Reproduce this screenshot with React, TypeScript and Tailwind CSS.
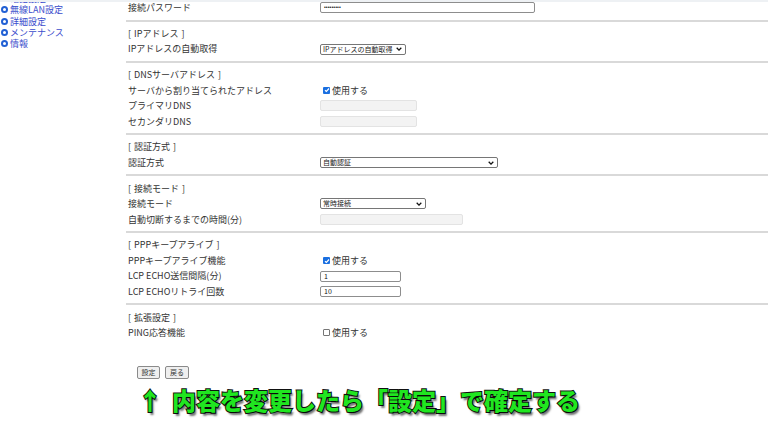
import type { ReactNode } from "react";

const font = "font-['Noto_Sans_CJK_JP','Noto_Sans',sans-serif]";

const menu = ["電話設定", "無線LAN設定", "詳細設定", "メンテナンス", "情報"];

function Bullet() {
  return (
    <span className="mr-[2px] inline-block h-[7px] w-[7px] shrink-0 rounded-full border-2 border-[#2160d4] bg-white" />
  );
}

function Row({ label, children }: { label: string; children?: ReactNode }) {
  return (
    <div className="flex h-[15.5px] items-center">
      <div className="w-[192px] shrink-0 whitespace-nowrap">{label}</div>
      {children}
    </div>
  );
}

function Section({
  title,
  children,
  last = false,
}: {
  title?: string;
  children: ReactNode;
  last?: boolean;
}) {
  return (
    <div
      className={`pb-[4px] ${title ? "pt-[4.25px]" : ""} ${
        last ? "" : "border-b-2 border-[#d9d9d9]"
      }`}
    >
      {title && (
        <div className="flex h-[15.5px] items-center gap-[3px] pl-[2px] whitespace-nowrap">
          <span>[</span>
          <span>{title}</span>
          <span>]</span>
        </div>
      )}
      <div className="pl-[2px]">{children}</div>
    </div>
  );
}

function TextBox({
  width,
  value = "",
  disabled = false,
}: {
  width: string;
  value?: string;
  disabled?: boolean;
}) {
  return (
    <div
      className={`flex h-[11px] items-center rounded-[2px] border px-[3px] text-[7px] leading-none text-[#111] ${width} ${
        disabled
          ? "border-[#e3e3e3] bg-[#f3f3f3]"
          : "border-[#8d8d8d] bg-white"
      }`}
    >
      {value}
    </div>
  );
}

function Select({ width, value }: { width: string; value: string }) {
  return (
    <div
      className={`flex h-[11px] items-center justify-between rounded-[2px] border border-[#767676] bg-white pl-[2px] pr-[3px] text-[7px] leading-none text-[#222] ${width}`}
    >
      <span className="whitespace-nowrap">{value}</span>
      <svg width="6" height="4" viewBox="0 0 6 4" className="shrink-0">
        <path d="M0.7 0.8 L3 3.1 L5.3 0.8" fill="none" stroke="#111" strokeWidth="1.3" />
      </svg>
    </div>
  );
}

function Check({ checked }: { checked: boolean }) {
  return (
    <div className="flex items-center pl-[3px]">
      {checked ? (
        <span className="mr-[2px] flex h-[7px] w-[7px] items-center justify-center rounded-[1px] bg-[#1a6fe0]">
          <svg width="6" height="6" viewBox="0 0 6 6">
            <path d="M1 3.2 L2.4 4.5 L5 1.5" fill="none" stroke="#fff" strokeWidth="1.2" />
          </svg>
        </span>
      ) : (
        <span className="mr-[2px] h-[7px] w-[7px] rounded-[1px] border border-[#767676] bg-white" />
      )}
      <span>使用する</span>
    </div>
  );
}

export default function App() {
  return (
    <div className={`relative flex h-[432px] w-[768px] overflow-hidden bg-white ${font}`}>
      <div className="absolute inset-x-0 top-0 h-[2px] bg-[#eef1f4]" />

      <nav className="-mt-[7px] w-[126px] shrink-0 pl-[1px] text-[9px] leading-[11.3px] text-[#3a4ccc]">
        {menu.map((m) => (
          <div key={m} className="flex h-[11.3px] items-center whitespace-nowrap">
            <Bullet />
            {m}
          </div>
        ))}
      </nav>

      <main className="flex-1 text-[9px] text-[#333]">
        <Section>
          <Row label="接続パスワード">
            <TextBox width="w-[215px] !text-[5.5px]" value="•••••••••" />
          </Row>
        </Section>

        <Section title="IPアドレス">
          <Row label="IPアドレスの自動取得">
            <Select width="w-[86px]" value="IPアドレスの自動取得" />
          </Row>
        </Section>

        <Section title="DNSサーバアドレス">
          <Row label="サーバから割り当てられたアドレス">
            <Check checked />
          </Row>
          <Row label="プライマリDNS">
            <TextBox width="w-[97px]" disabled />
          </Row>
          <Row label="セカンダリDNS">
            <TextBox width="w-[97px]" disabled />
          </Row>
        </Section>

        <Section title="認証方式">
          <Row label="認証方式">
            <Select width="w-[178px]" value="自動認証" />
          </Row>
        </Section>

        <Section title="接続モード">
          <Row label="接続モード">
            <Select width="w-[106px]" value="常時接続" />
          </Row>
          <Row label="自動切断するまでの時間(分)">
            <TextBox width="w-[143px]" disabled />
          </Row>
        </Section>

        <Section title="PPPキープアライブ">
          <Row label="PPPキープアライブ機能">
            <Check checked />
          </Row>
          <Row label="LCP ECHO送信間隔(分)">
            <TextBox width="w-[81px]" value="1" />
          </Row>
          <Row label="LCP ECHOリトライ回数">
            <TextBox width="w-[81px]" value="10" />
          </Row>
        </Section>

        <Section title="拡張設定" last>
          <Row label="PING応答機能">
            <Check checked={false} />
          </Row>
        </Section>

        <div className="mt-[21.5px] flex gap-[5px] pl-[11px]">
          <button className="flex h-[13px] w-[23px] items-center justify-center rounded-[2px] border border-[#8a8a8a] bg-[#efefef] text-[7px] leading-none text-[#333]">
            設定
          </button>
          <button className="flex h-[13px] w-[24px] items-center justify-center rounded-[2px] border border-[#8a8a8a] bg-[#efefef] text-[7px] leading-none text-[#333]">
            戻る
          </button>
        </div>

        <div className="mt-[8px] flex items-center whitespace-nowrap pl-[12px] text-[24px] font-black leading-[26px] text-[#20e620] [-webkit-text-stroke:2px_#111] [paint-order:stroke_fill] [text-shadow:2px_3px_2px_rgba(0,0,0,0.55)]">
          <span className="mr-[10px]">↑</span>
          <span>内容を変更したら「設定」で確定する</span>
        </div>
      </main>
    </div>
  );
}
